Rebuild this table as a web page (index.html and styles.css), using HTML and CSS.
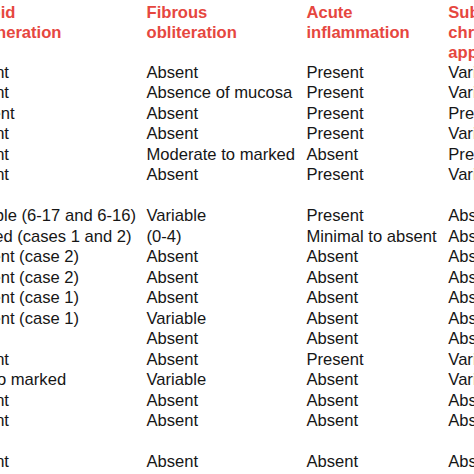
FILE: index.html
```html
<!DOCTYPE html>
<html>
<head>
<meta charset="utf-8">
<link rel="stylesheet" href="styles.css">
</head>
<body>
<div class="sheet">
  <div class="grid">
    <div class="th">Mucoid<br>degeneration</div>
    <div class="th">Fibrous<br>obliteration</div>
    <div class="th">Acute<br>inflammation</div>
    <div class="th">Subacute/<br>chronic<br>appearance</div>

    <div class="td">Absent</div><div class="td">Absent</div><div class="td">Present</div><div class="td">Variable</div>
    <div class="td">Absent</div><div class="td">Absence of mucosa</div><div class="td">Present</div><div class="td">Variable</div>
    <div class="td">Present</div><div class="td">Absent</div><div class="td">Present</div><div class="td">Present</div>
    <div class="td">Absent</div><div class="td">Absent</div><div class="td">Present</div><div class="td">Variable</div>
    <div class="td">Absent</div><div class="td">Moderate to marked</div><div class="td">Absent</div><div class="td">Present</div>
    <div class="td">Absent</div><div class="td">Absent</div><div class="td">Present</div><div class="td">Variable</div>
    <div class="td"></div><div class="td"></div><div class="td"></div><div class="td"></div>
    <div class="td">Variable (6-17 and 6-16)</div><div class="td">Variable</div><div class="td">Present</div><div class="td">Absent</div>
    <div class="td">Marked (cases 1 and 2)</div><div class="td">(0-4)</div><div class="td">Minimal to absent</div><div class="td">Absent</div>
    <div class="td">Present (case 2)</div><div class="td">Absent</div><div class="td">Absent</div><div class="td">Absent</div>
    <div class="td">Present (case 2)</div><div class="td">Absent</div><div class="td">Absent</div><div class="td">Absent</div>
    <div class="td">Present (case 1)</div><div class="td">Absent</div><div class="td">Absent</div><div class="td">Absent</div>
    <div class="td">Present (case 1)</div><div class="td">Variable</div><div class="td">Absent</div><div class="td">Absent</div>
    <div class="td"></div><div class="td">Absent</div><div class="td">Absent</div><div class="td">Absent</div>
    <div class="td">Absent</div><div class="td">Absent</div><div class="td">Present</div><div class="td">Variable</div>
    <div class="td">Mild to marked</div><div class="td">Variable</div><div class="td">Absent</div><div class="td">Variable</div>
    <div class="td">Absent</div><div class="td">Absent</div><div class="td">Absent</div><div class="td">Absent</div>
    <div class="td">Absent</div><div class="td">Absent</div><div class="td">Absent</div><div class="td">Absent</div>
    <div class="td"></div><div class="td"></div><div class="td"></div><div class="td"></div>
    <div class="td">Absent</div><div class="td">Absent</div><div class="td">Absent</div><div class="td">Absent</div>
  </div>
</div>
</body>
</html>
```

FILE: styles.css
```css
html, body {
  margin: 0;
  padding: 0;
  background: #ffffff;
  overflow: hidden;
  width: 474px;
  height: 474px;
}

.sheet {
  width: 474px;
  height: 474px;
  overflow: hidden;
  padding-top: 2.5px;
  box-sizing: border-box;
}

.grid {
  display: grid;
  grid-template-columns: 189.2px 160px 141.8px 200px;
  margin-left: -42.7px;
  font-family: "Liberation Sans", Arial, sans-serif;
  font-size: 16.6px;
  color: #161616;
}

.th {
  font-weight: bold;
  color: #e6473f;
  line-height: 20px;
  white-space: nowrap;
}

.td {
  line-height: 20.5px;
  min-height: 20.5px;
  white-space: nowrap;
}
```
